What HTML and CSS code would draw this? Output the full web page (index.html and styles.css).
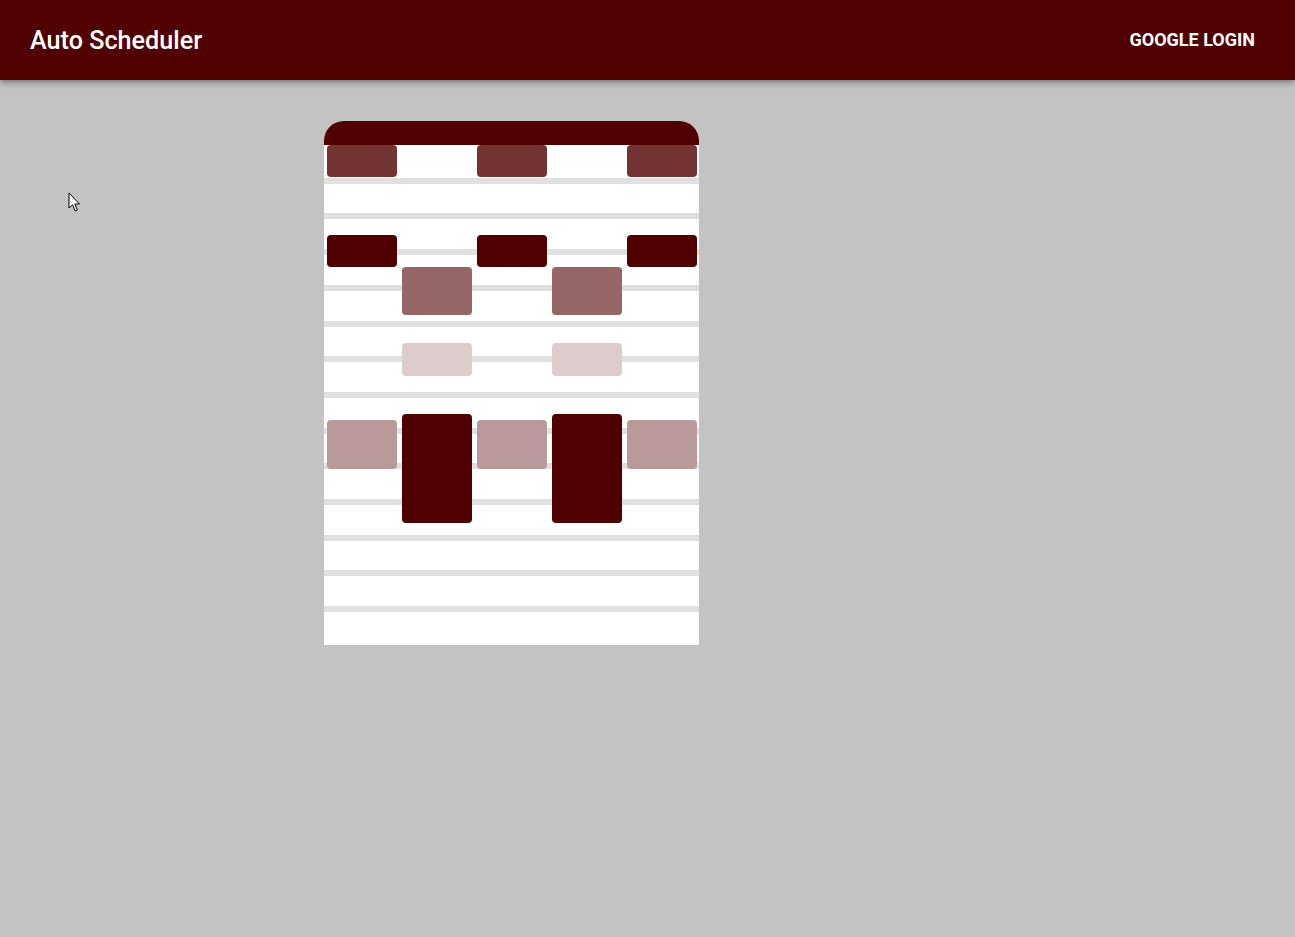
FILE: index.html
```html
<!DOCTYPE html>
<html lang="en">
<head>
<meta charset="utf-8">
<title>Auto Scheduler</title>
<link rel="stylesheet" href="styles.css">
</head>
<body>
<header class="appbar">
  <div class="title">Auto Scheduler</div>
  <button class="login">Google Login</button>
</header>
<main class="content">
  <section class="calendar">
    <div class="cal-head"></div>
    <div class="cal-body">
      <div class="row"></div><div class="row"></div><div class="row"></div><div class="row"></div>
      <div class="row"></div><div class="row"></div><div class="row"></div><div class="row"></div>
      <div class="row"></div><div class="row"></div><div class="row"></div><div class="row"></div>
      <div class="row"></div><div class="row"></div>

      <div class="ev c1 t80" style="top:0;height:32px"></div>
      <div class="ev c3 t80" style="top:0;height:32px"></div>
      <div class="ev c5 t80" style="top:0;height:32px"></div>

      <div class="ev c1 t100" style="top:90px;height:32px"></div>
      <div class="ev c3 t100" style="top:90px;height:32px"></div>
      <div class="ev c5 t100" style="top:90px;height:32px"></div>

      <div class="ev c2 t60" style="top:122px;height:48px"></div>
      <div class="ev c4 t60" style="top:122px;height:48px"></div>

      <div class="ev c2 t20" style="top:198px;height:33px"></div>
      <div class="ev c4 t20" style="top:198px;height:33px"></div>

      <div class="ev c1 t40" style="top:275px;height:49px"></div>
      <div class="ev c3 t40" style="top:275px;height:49px"></div>
      <div class="ev c5 t40" style="top:275px;height:49px"></div>

      <div class="ev c2 t100" style="top:269px;height:109px"></div>
      <div class="ev c4 t100" style="top:269px;height:109px"></div>
    </div>
  </section>
</main>
<svg class="cursor" width="14" height="22" viewBox="0 0 14 22" aria-hidden="true">
  <path d="M1 1 L1 16 L4.5 12.8 L7.2 19 L9.4 18 L6.8 12 L11.5 12 Z" fill="#fff" stroke="#000" stroke-width="1" stroke-linejoin="miter"/>
</svg>
</body>
</html>
```
FILE: styles.css
```css
* { box-sizing: border-box; }
html, body { margin: 0; padding: 0; }
body {
  background: #c3c3c3;
  font-family: Roboto, "Liberation Sans", Arial, sans-serif;
  min-height: 937px;
  position: relative;
}
.appbar {
  height: 80px;
  background: #500000;
  color: #fff;
  display: flex;
  align-items: center;
  justify-content: space-between;
  padding: 0 40px 0 30px;
  box-shadow: 0 2px 4px -1px rgba(0,0,0,0.2), 0 4px 5px 0 rgba(0,0,0,0.14), 0 1px 10px 0 rgba(0,0,0,0.12);
  position: relative;
  z-index: 1;
}
.title {
  font-size: 25.2px;
  font-weight: 500;
  letter-spacing: 0;
  margin-top: 0;
}
.login {
  background: none;
  border: 0;
  color: #fff;
  font-family: inherit;
  font-size: 18px;
  font-weight: 700;
  text-transform: uppercase;
  padding: 0;
  margin-top: -1px;
  letter-spacing: 0;
}
.content {
  padding: 41px 0 0 324px;
}
.calendar {
  width: 375px;
}
.cal-head {
  height: 24px;
  background: #500000;
  border-radius: 20px 20px 0 0;
}
.cal-body {
  position: relative;
  height: 500px;
  background: #fff;
  display: flex;
  flex-direction: column;
}
.row {
  height: calc(500px / 14);
  background: linear-gradient(to bottom,
    #e0e0e0 0, #e0e0e0 3px,
    transparent 3px, transparent calc(100% - 3px),
    #e0e0e0 calc(100% - 3px), #e0e0e0 100%);
}
.row:first-child {
  background: linear-gradient(to bottom,
    transparent 0, transparent calc(100% - 3px),
    #e0e0e0 calc(100% - 3px), #e0e0e0 100%);
}
.row:nth-child(14) {
  background: linear-gradient(to bottom,
    #e0e0e0 0, #e0e0e0 3px,
    transparent 3px, transparent 100%);
}
.ev {
  position: absolute;
  width: 70px;
  border-radius: 4px;
}
.c1 { left: 3px; }
.c2 { left: 78px; }
.c3 { left: 153px; }
.c4 { left: 228px; }
.c5 { left: 303px; }
.t100 { background: #500000; }
.t80 { background: #733333; }
.t60 { background: #966666; }
.t40 { background: #b99999; }
.t20 { background: #dccccc; }
.cursor {
  position: absolute;
  left: 68px;
  top: 192px;
}
```
